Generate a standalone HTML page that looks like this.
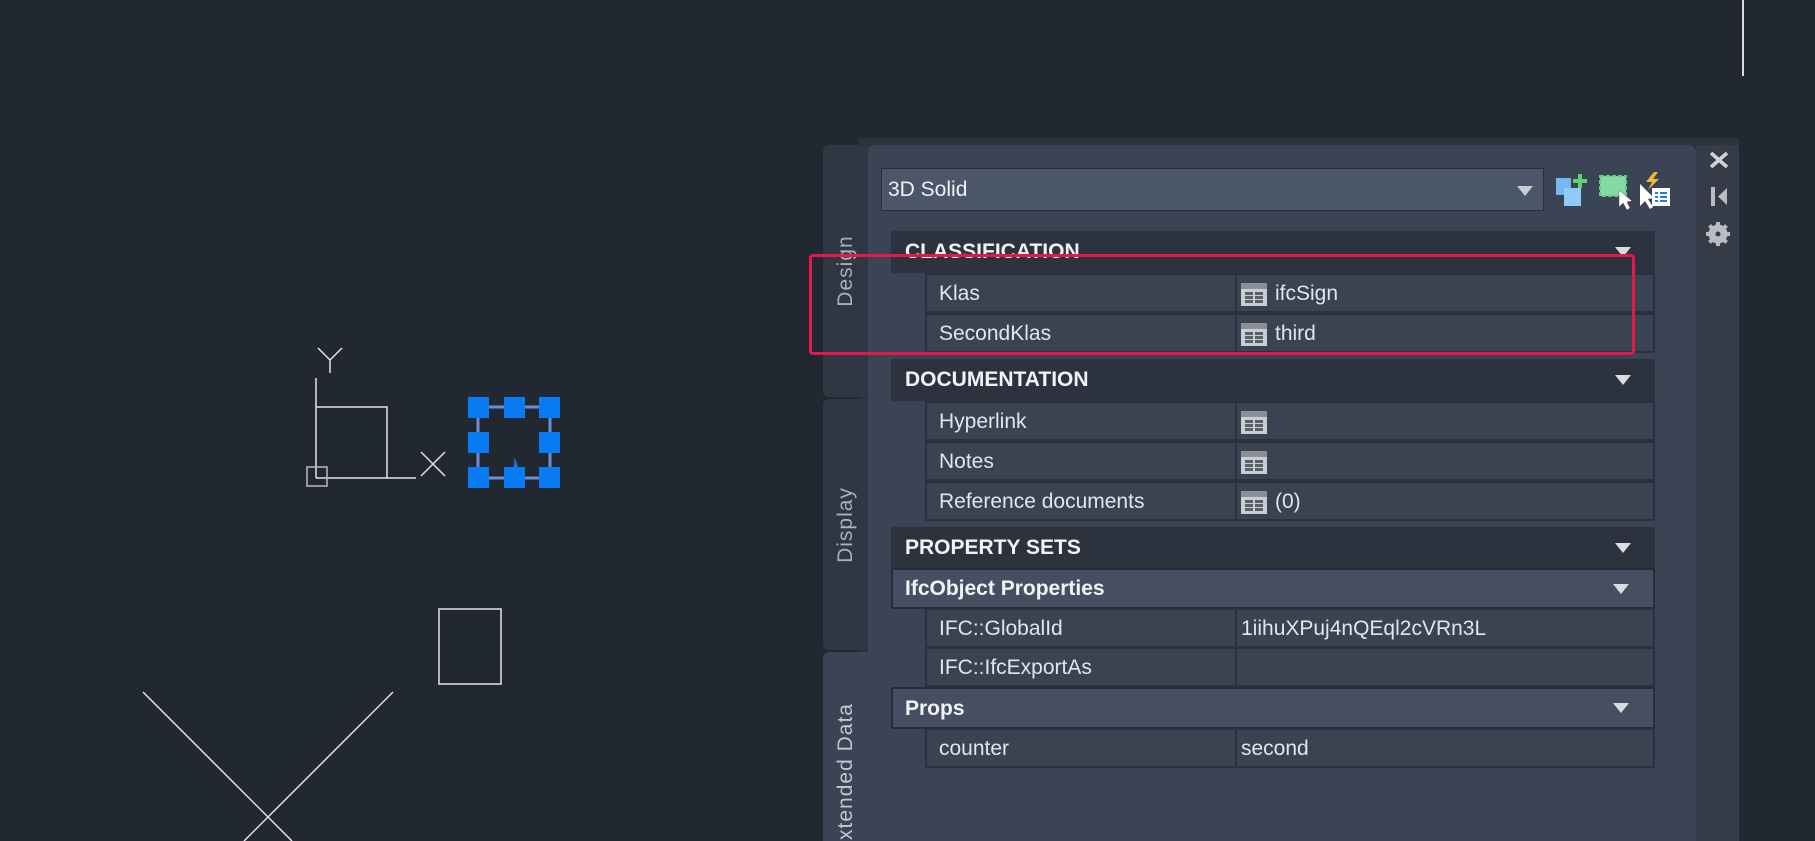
<!DOCTYPE html>
<html><head><meta charset="utf-8"><style>
*{margin:0;padding:0;box-sizing:border-box}
body{width:1815px;height:841px;overflow:hidden;background:#222831;font-family:"Liberation Sans",sans-serif;position:relative;color:#e6e8ec}
.a{position:absolute}
.hdr{position:absolute;left:891px;width:764px;background:#2d333e;font-weight:bold;font-size:21px;color:#f2f3f5;padding-left:14px}
.sub{position:absolute;left:891px;width:764px;background:#464f61;border:2px solid #272c35;font-weight:bold;font-size:21px;color:#f2f3f5;padding-left:12px}
.tri{position:absolute;right:24px;width:0;height:0;border-left:8px solid transparent;border-right:8px solid transparent;border-top:10px solid #d8dbe0}
.row{position:absolute;left:925px;width:730px;height:40px;background:#3a4352;border:2px solid #2b313c;font-size:21px;color:#e2e5ea}
.row .k{position:absolute;left:12px;top:7px}
.row .v{position:absolute;left:308px;top:0;bottom:0;right:0;border-left:2px solid #2b313c}
.row .v span{position:absolute;left:38px;top:7px}
.row .v span.n{left:4px}
.ic{position:absolute;left:4px;top:8px;width:26px;height:23px;background:#c9ccd1}
.ic:before{content:"";position:absolute;left:0;top:0;width:26px;height:6px;background:#8b8f96}
.ic:after{content:"";position:absolute;left:4px;top:9px;width:18px;height:11px;background:linear-gradient(90deg,transparent 8px,#c9ccd1 8px 10px,transparent 10px),repeating-linear-gradient(#5a606a 0 3px,#c9ccd1 3px 4px)}
.tab{position:absolute;left:823px;width:45px;background:#303642;border-radius:6px 0 0 6px;overflow:hidden}
.tab span{position:absolute;left:50%;top:50%;transform:translate(-50%,-50%) rotate(-90deg);font-size:21px;color:#aab0ba;white-space:nowrap;letter-spacing:1px}
</style></head><body>
<div class="a" style="left:1742px;top:0;width:2px;height:76px;background:#d8dadd"></div>
<svg class="a" style="left:0;top:0" width="820" height="841">
<g stroke="#e4e4e4" stroke-width="1.5" fill="none">
<path d="M318 348 L330 360 L342 348 M330 360 V373"/>
<path d="M316 378 V478 M316 407 H387 V478 H316 M387 478 H416" />
<rect x="307" y="467" width="20" height="19" stroke="#bbb"/>
<path d="M421 452 L445 476 M445 452 L421 476"/>
<rect x="439" y="609" width="62" height="75"/>
<path d="M143 692 L292 841 M393 692 L244 841"/>
<rect x="478" y="407" width="72" height="71" stroke="#6a8fd8" stroke-width="3"/>
</g>
<g fill="#0a7cf3">
<rect x="468" y="397" width="21" height="21"/><rect x="504" y="397" width="21" height="21"/><rect x="539" y="397" width="21" height="21"/>
<rect x="468" y="432" width="21" height="21"/><rect x="539" y="432" width="21" height="21"/>
<rect x="468" y="467" width="21" height="21"/><rect x="504" y="467" width="21" height="21"/><rect x="539" y="467" width="21" height="21"/>
<path d="M514 467 L514.5 457 L518 467Z"/>
</g>
</svg>
<div class="a" style="left:858px;top:138px;width:881px;height:703px;background:#2d333e"></div>
<div class="a" style="left:1696px;top:145px;width:43px;height:696px;background:#353c48"></div>
<div class="tab" style="top:145px;height:252px"><span>Design</span></div>
<div class="tab" style="top:399px;height:251px"><span>Display</span></div>
<div class="tab" style="top:652px;height:189px;background:#3b4454;border-radius:6px 0 0 0"><span style="top:127px;color:#c2c7cf">Extended Data</span></div>
<div class="a" style="left:868px;top:145px;width:828px;height:696px;background:#3b4454;border-radius:6px 8px 0 0"></div>
<div class="a" style="left:881px;top:168px;width:663px;height:43px;background:#4b5669;border:1px solid #2a2f38;font-size:21px;padding:9px 0 0 6px;color:#eef0f3">3D Solid<div class="tri" style="right:10px;top:17px;border-top-color:#c8ccd3"></div></div>
<svg class="a" style="left:1550px;top:170px" width="130" height="42">
<rect x="6" y="8" width="15" height="17" fill="#77b6f0"/><rect x="14" y="18" width="17" height="18" fill="#8fcbf7"/>
<path d="M30 4V18M23 11H37" stroke="#5fd36e" stroke-width="4"/>
<rect x="50" y="6" width="26" height="20" fill="#85d9a3" stroke="#5fcf7d" stroke-width="2" stroke-dasharray="4 2"/>
<path d="M69 20 L69 37 L73 33 L77 40 L80 38 L77 32 L82 31Z" fill="#fff" stroke="#555" stroke-width=".5"/>
<path d="M104 2 L96 12 L102 12 L98 20 L109 9 L103 9 L108 2Z" fill="#f3b73a"/>
<path d="M90 14 L90 36 L95 31 L100 39 L103 37 L98 29 L104 28Z" fill="#fff"/>
<rect x="102" y="18" width="18" height="18" fill="#fff"/>
<g fill="#1e7fe0"><rect x="105" y="22" width="3" height="2"/><rect x="110" y="22" width="7" height="2"/><rect x="105" y="26" width="3" height="2"/><rect x="110" y="26" width="7" height="2"/><rect x="105" y="30" width="3" height="2"/><rect x="110" y="30" width="7" height="2"/></g>
</svg>
<svg class="a" style="left:1700px;top:148px" width="36" height="100">
<path d="M11 5 L27 19 M27 5 L11 19" stroke="#cfd2d7" stroke-width="3.5"/>
<rect x="11" y="39" width="4" height="19" fill="#b8bcc3"/><path d="M27 40 L18 48.5 L27 57Z" fill="#b8bcc3"/>
<circle cx="18" cy="86" r="7" fill="none" stroke="#b8bcc3" stroke-width="5"/>
<path d="M18 74V98M6 86H30M9.5 77.5L26.5 94.5M26.5 77.5L9.5 94.5" stroke="#b8bcc3" stroke-width="4"/>
<circle cx="18" cy="86" r="2.5" fill="#353c48"/>
</svg>

<div class="hdr" style="top:231px;height:42px;padding-top:9px">CLASSIFICATION<div class="tri" style="top:16px"></div></div>
<div class="row" style="top:273px"><span class="k">Klas</span><div class="v"><div class="ic"></div><span>ifcSign</span></div></div>
<div class="row" style="top:313px"><span class="k">SecondKlas</span><div class="v"><div class="ic"></div><span>third</span></div></div>

<div class="hdr" style="top:359px;height:42px;padding-top:9px">DOCUMENTATION<div class="tri" style="top:16px"></div></div>
<div class="row" style="top:401px"><span class="k">Hyperlink</span><div class="v"><div class="ic"></div></div></div>
<div class="row" style="top:441px"><span class="k">Notes</span><div class="v"><div class="ic"></div></div></div>
<div class="row" style="top:481px"><span class="k">Reference documents</span><div class="v"><div class="ic"></div><span>(0)</span></div></div>

<div class="hdr" style="top:527px;height:41px;padding-top:9px">PROPERTY SETS<div class="tri" style="top:16px"></div></div>
<div class="sub" style="top:568px;height:41px;padding-top:7px">IfcObject Properties<div class="tri" style="top:14px"></div></div>
<div class="row" style="top:608px"><span class="k">IFC::GlobalId</span><div class="v"><span class="n">1iihuXPuj4nQEql2cVRn3L</span></div></div>
<div class="row" style="top:647px"><span class="k">IFC::IfcExportAs</span><div class="v"></div></div>
<div class="sub" style="top:687px;height:42px;padding-top:8px">Props<div class="tri" style="top:14px"></div></div>
<div class="row" style="top:728px"><span class="k">counter</span><div class="v"><span class="n">second</span></div></div>

<div class="a" style="left:809px;top:254px;width:826px;height:101px;border:3px solid #e8174b;border-radius:4px"></div>
</body></html>
